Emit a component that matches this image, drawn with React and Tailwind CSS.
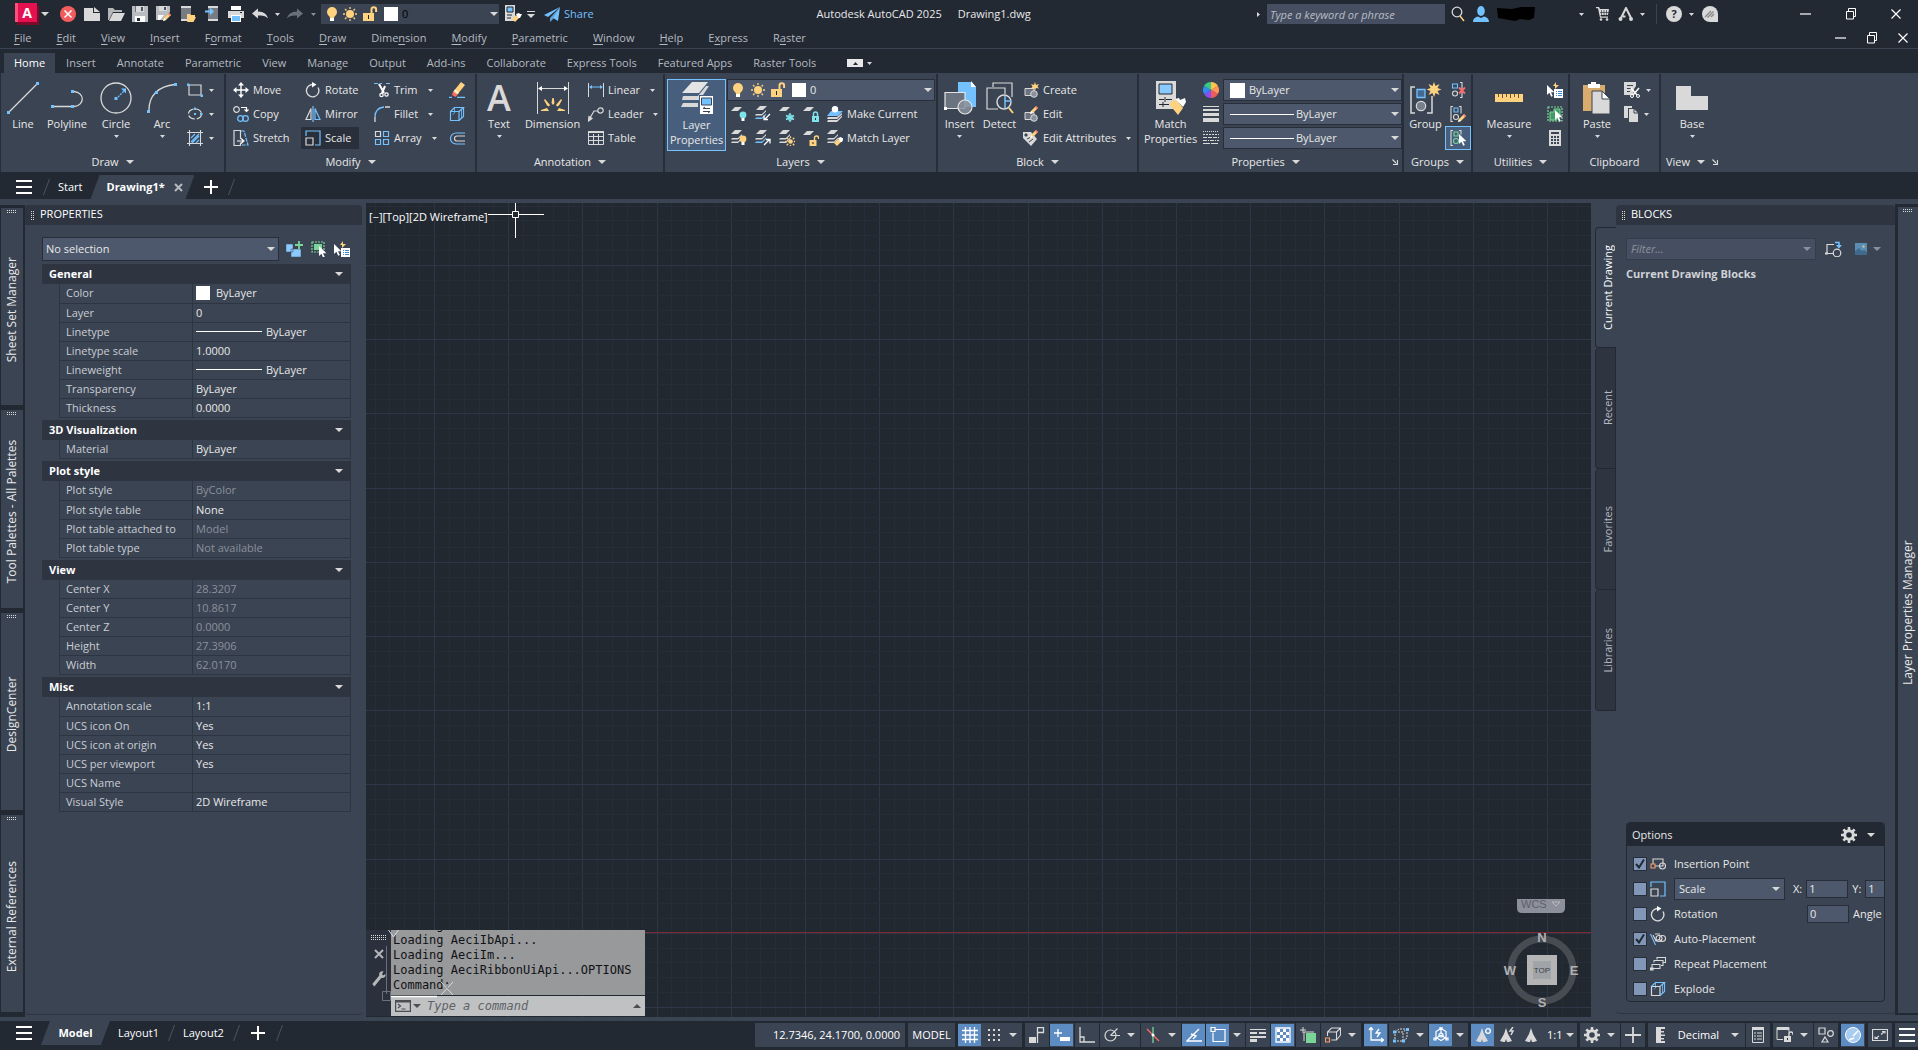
import { clsx } from 'clsx'

const W = '#d9d9d9'
const B = '#73c2ff'
const Y = '#ffd27f'
const G = '#7ad696'
const R = '#ff6b6b'
const C = '#7fe3ea'

const sheet = (x, y, fill = W) => <path d={`M${x + 4} ${y}h7l-4 4h-7z`} fill={fill} />

// lower sheets of a stack, only their front edge is seen
const edge = (x, y, fill = W) => <path d={`M${x + 1} ${y}h6l4-4v1.500l-4 4h-7z`} fill={fill} />

const bulb = (x, y, fill = Y) => (
    <g>
        <circle cx={x} cy={y} r="3.4" fill={fill} />
        <path d={`M${x - 1.5} ${y + 3}h3v3h-3z`} fill="#fff" />
    </g>
)

const sun = (x, y, r) => (
    <g stroke={Y} strokeWidth="1.3">
        <circle cx={x} cy={y} r={r} fill={Y} stroke="none" />
        {[0, 45, 90, 135, 180, 225, 270, 315].map((a) => (
            <path key={a} d={`M${x} ${y - r - 1}v-2`} transform={`rotate(${a} ${x} ${y})`} />
        ))}
    </g>
)

const padlock = (x, y, fill = Y, open = true) => (
    <g>
        <path d={`M${x} ${y}h7v6h-7z`} fill={fill} />
        <path
            d={open ? `M${x + 5} ${y}v-2a2 2 0 0 1 4 0v1` : `M${x + 1.5} ${y}v-2a2 2 0 0 1 4 0v2`}
            fill="none"
            stroke={fill}
            strokeWidth="1.4"
        />
        <path d={`M${x + 3} ${y + 2}h1v2h-1z`} fill="#222933" />
    </g>
)

const pencil = (x, y) => (
    <g>
        <path d={`M${x} ${y + 8}l1-3 5-5 2 2-5 5z`} fill={Y} />
        <path d={`M${x + 5} ${y + 1}l1-1 2 2-1 1z`} fill={R} />
        <path d={`M${x} ${y + 8}l1-3 2 2z`} fill="#fff" />
    </g>
)

const cursor = (x, y) => <path d={`M${x} ${y}v10l2.4-2.2 1.8 4 1.6-.8-1.8-3.8h3.4z`} fill="#fff" />

const brush = (x, y) => (
    <g>
        <path d={`M${x} ${y + 6}l4-4 3 3-4 4z`} fill={Y} />
        <path d={`M${x + 4} ${y + 1}l3-1 1 1 2 0-2 4-2 0z`} fill="#fff" />
    </g>
)

const cube = (front, side) => (
    <g fill="none" strokeWidth="1.2">
        <path d="M1.500 5.500h8.500v9h-8.500z" stroke={front} />
        <path d="M1.500 5.500l4-4h9l-4.500 4M14.500 1.500v9l-4.500 4" stroke={side} />
        <path d="M4 8.500l2-2.500M5.500 1.500v3.500M12.500 3v9.500" stroke={side} strokeWidth="0.8" />
    </g>
)

const annoStar = <path d="M8 1l2 6 4 7-3.500 1h-1.500l-1-3-1 3h-1.500l-3.500-1 4-7z" fill={W} />

// [width, height, drawing]
const icons = {
    newFile: [20, 16, <path d="M2 2h9v5h7v8h-16zM12 1l6 5h-6z" fill={W} />],
    open: [
        20,
        16,
        <g fill={W}>
            <path d="M2 2h5l2 2h7v2h-9l-4 8h-1z" fillOpacity="0.800" />
            <path d="M7 7h12l-4 8h-12z" />
        </g>
    ],
    save: [
        16,
        16,
        <g>
            <path d="M0 0h16v16h-16z" fill="#b9bcc1" />
            <path d="M3 0h9v6h-9z" fill="#6f7683" />
            <path d="M4 0h8v6h-8z" fill={W} />
            <path d="M9 1h2v4h-2z" fill="#4b5463" />
            <path d="M3 10h10v6h-10z" fill="#fff" />
            <path d="M5 12h3v3h-3z" fill="#222933" />
        </g>
    ],
    saveAs: [
        16,
        16,
        <g>
            <path d="M0 0h14v6l-7 8h-7z" fill="#b9bcc1" />
            <path d="M3 0h8v5h-8z" fill={W} />
            <path d="M8 1h2v3h-2z" fill="#4b5463" />
            <path d="M2 9h6l-4 5h-2z" fill="#fff" />
            {pencil(7, 7)}
        </g>
    ],
    mobileOpen: [
        16,
        18,
        <g>
            <path d="M1 1h10v15h-10z" fill="#777c84" />
            <path d="M1 1h10v2h-10zM1 14h7v2h-7z" fill={W} />
            <path d="M7 9h3l1 1h4v2h-6l-2 4zM9 12h7l-2.500 5h-6.500z" fill={Y} />
        </g>
    ],
    mobileSave: [
        16,
        18,
        <g>
            <path d="M4 1h10v15h-10z" fill="#777c84" />
            <path d="M4 1h10v2h-10zM4 14h10v2h-10z" fill={W} />
            <path d="M1 5.500h5v-3l4 4-4 4v-3h-5z" fill={B} />
        </g>
    ],
    print: [
        18,
        16,
        <g>
            <path d="M4 0h10v4h-10z" fill="#fff" />
            <path d="M1 5h16v7h-16z" fill={W} />
            <path d="M4 9h10v7h-10z" fill="#fff" />
            <path d="M5 10h8v5h-8z" fill={B} />
            <path d="M13 6h2v1h-2z" fill="#222933" />
        </g>
    ],
    undo: [18, 12, <path d="M1 5.500l6-5v3c6 0 9 3 10 7-3-3-5-3-10-3v3z" fill={W} />],
    redo: [18, 12, <path d="M17 5.500l-6-5v3c-6 0-9 3-10 7 3-3 5-3 10-3v3z" fill="#6a707a" />],
    bulb: [12, 16, <g><circle cx="6" cy="6" r="5" fill={Y} /><path d="M4 10h4v5h-4z" fill="#fff" /><path d="M3 9h6l-1 3h-4z" fill={Y} /></g>],
    sun: [16, 16, sun(8, 8, 4)],
    lock: [
        16,
        16,
        <g>
            <path d="M1 7h11v8h-11z" fill={Y} />
            <path d="M9.500 7v-3.500a2.300 2.300 0 0 1 4.600 0v2.500" fill="none" stroke={Y} strokeWidth="2" />
            <path d="M6 9h1v4h-1z" fill="#222933" />
        </g>
    ],
    matchProps: [
        18,
        18,
        <g>
            <path d="M1 0h10v16h-10z" fill={W} />
            <path d="M3 2h6v5h-6z" fill={B} stroke="#222933" />
            <path d="M3 10h5M3 13h4" stroke="#222933" />
            {brush(8, 8)}
        </g>
    ],
    share: [
        16,
        15,
        <g fill={B}>
            <path d="M16 0l-16 8 4 2z" />
            <path d="M16 0l-10 11v4l3-3z" opacity="0.800" />
            <path d="M16 0l-2 14-5-3z" />
        </g>
    ],
    search: [
        14,
        16,
        <g fill="none">
            <circle cx="6" cy="6" r="4.800" stroke={W} strokeWidth="1.300" />
            <path d="M9 10l4 5" stroke={Y} strokeWidth="1.500" />
        </g>
    ],
    user: [16, 16, <g fill={B}><ellipse cx="8" cy="5" rx="3.800" ry="5" /><path d="M0 16c0-4 3-5 5-5.500l3 1.500 3-1.500c2 .5 5 1.500 5 5.500z" /></g>],
    cart: [
        14,
        14,
        <g fill={W}>
            <path d="M0 0h3l1 2h9l-1 6h-7.500l.5 1.500h7v1.200h-8l-2-9.500h-2z" />
            <path d="M5.500 3v5M8 3v5M10.500 3v5M4 5.500h9" stroke="#222933" strokeWidth="0.600" />
            <circle cx="5" cy="12.500" r="1.300" />
            <circle cx="11" cy="12.500" r="1.300" />
        </g>
    ],
    appStore: [
        16,
        14,
        <g fill="none" stroke={W} strokeWidth="2">
            <path d="M3 11l5-10 5 10M5 9.500h2.500" />
            <circle cx="2.500" cy="12" r="1" />
            <circle cx="13" cy="12" r="1" />
        </g>
    ],
    assistant: [
        16,
        16,
        <g>
            <path d="M16 16h-8a8 8 0 1 1 8-8z" fill={W} />
            <path d="M3 11l6-6M5.500 11.500l6-6M9 11l3-3" stroke="#888" strokeWidth="1.400" />
        </g>
    ],
    redaction: [38, 14, <path d="M0 1l15 1 9-2 14 0-1 11-5 2-9-1-5 2-17-3z" fill="#000" />],
    restore: [10, 12, <path d="M.5 3.500h7v7.500h-7zM2.500 3v-2.500h7v8h-2" fill="none" stroke="#fff" />],
    times: [10, 10, <path d="M.5.5l9 9M9.500.5l-9 9" stroke="#fff" strokeWidth="1.200" />],
    minus: [11, 2, <path d="M0 1h11" stroke="#fff" strokeWidth="1.200" />],

    line: [32, 32, <g><path d="M2 30l28-28" stroke={W} strokeWidth="1.300" /><path d="M0 29h3v3h-3zM29 0h3v3h-3z" fill={B} /></g>],
    polyline: [
        32,
        32,
        <g>
            <path d="M2 24.500h20M23 24.500c11-1 11-14 0-15" fill="none" stroke={W} strokeWidth="1.300" />
            <path d="M0 23h3v3h-3zM20 23h3v3h-3zM20 8h3v3h-3z" fill={B} />
        </g>
    ],
    circle: [
        32,
        32,
        <g>
            <circle cx="16" cy="16" r="15" fill="none" stroke={W} strokeWidth="1.300" />
            <path d="M18 15l6-6" stroke={B} strokeWidth="1.300" strokeDasharray="2 1" />
            <path d="M14.500 15h3v3h-3zM26 6.500v5l-5-5z" fill={B} />
        </g>
    ],
    arc: [
        32,
        32,
        <g>
            <path d="M3 28c0-14 9-24 26-25.500" fill="none" stroke={W} strokeWidth="1.300" />
            <path d="M1 28h3v3h-3zM28 1h3v3h-3zM9 9h3v3h-3z" fill={B} />
        </g>
    ],
    rect: [16, 16, <g><path d="M2 3h12v10h-12z" fill="none" stroke={W} strokeWidth="1.200" /><path d="M0 1.500h2.500v2.500h-2.500zM13.500 12.500h2.500v2.500h-2.500z" fill={B} /></g>],
    ellipse: [
        16,
        16,
        <g>
            <ellipse cx="8" cy="8" rx="6.500" ry="5" fill="none" stroke={W} strokeWidth="1.200" strokeDasharray="7 2" />
            <path d="M7 1.500h2v2.500h-2zM7 7h2v2h-2zM13 7h2.500v2h-2.500z" fill={B} />
        </g>
    ],
    hatch: [
        16,
        16,
        <g>
            <path d="M0 2.500h16M0 13.500h16M2.500 0v16M13.500 0v16" stroke={W} strokeWidth="1.100" />
            <path d="M4 8l4-4M4 12l8-8M5 13l7-7M9 13l3-3" stroke={B} strokeWidth="1.200" />
        </g>
    ],
    move: [
        16,
        16,
        <g fill="#fff">
            <path d="M8 0l3 3.500h-6zM8 16l3-3.500h-6zM0 8l3.500-3v6zM16 8l-3.500-3v6z" />
            <path d="M7.300 3h1.400v10h-1.400zM3 7.300h10v1.400h-10z" />
        </g>
    ],
    copy: [
        16,
        16,
        <g fill="none" strokeWidth="1.200">
            <circle cx="3.500" cy="3.500" r="2.800" stroke={W} />
            <path d="M8 1.500h5.500v3M11.500 3.500l2 2 2-2" stroke="#fff" />
            <circle cx="7.500" cy="12.500" r="2.800" stroke={B} />
            <circle cx="12.500" cy="12.500" r="2.800" stroke={B} />
        </g>
    ],
    stretch: [
        16,
        16,
        <g fill="none">
            <path d="M7.500 9v-8.500h-6.500v15h6.500v-3" stroke={W} strokeWidth="1.200" />
            <path d="M8 1h3l4 14h-6" stroke={B} strokeWidth="1.200" strokeDasharray="4 1" />
            <path d="M4 11h6M8 8.500l3 2.500-3 2.500" stroke="#fff" strokeWidth="1.200" />
        </g>
    ],
    rotate: [
        16,
        16,
        <g>
            <path d="M13 5.500a6.200 6.200 0 1 1-6-3" fill="none" stroke={W} strokeWidth="1.400" />
            <path d="M7 0l4.500 2.500-4.500 3z" fill="#fff" />
        </g>
    ],
    mirror: [
        16,
        16,
        <g fill="none" strokeWidth="1.200">
            <path d="M6 2.500v11h-5z" stroke={W} />
            <path d="M8 0v16M10 2.500v11h5z" stroke={B} />
        </g>
    ],
    scale: [
        16,
        16,
        <g fill="none" strokeWidth="1.200">
            <path d="M1 6v-5h14v14h-5" stroke={B} />
            <path d="M1 8h7v7h-7z" stroke={W} />
        </g>
    ],
    trim: [
        16,
        16,
        <g fill="none">
            <path d="M0 1.500h4M6 1.500h2M12 1.500h4" stroke={B} strokeWidth="1.200" />
            <path d="M5 2l5 9M11 4l-3 7" stroke="#fff" strokeWidth="2" />
            <circle cx="7.500" cy="13" r="1.700" stroke="#fff" strokeWidth="1.200" />
            <circle cx="12.500" cy="12.500" r="1.700" stroke="#fff" strokeWidth="1.200" />
        </g>
    ],
    fillet: [
        16,
        16,
        <g fill="none" strokeWidth="1.300">
            <path d="M1 11c0-7 4-9.500 9-10" stroke={B} />
            <path d="M11 1h5M1 11v5" stroke={W} />
        </g>
    ],
    array: [
        16,
        16,
        <g fill="none" strokeWidth="1.200">
            <path d="M1.500 1.500h5v5h-5z" stroke={W} />
            <path d="M9.500 1.500h5v5h-5zM1.500 9.500h5v5h-5zM9.500 9.500h5v5h-5z" stroke={B} />
        </g>
    ],
    erase: [
        16,
        16,
        <g>
            <path d="M4 10l8-10 4 3-8 10z" fill={Y} />
            <path d="M4 9.500l4.500 3.500-2 2-3.500-2z" fill={R} />
            <path d="M5.500 8l4 3.200" stroke="#fff" strokeWidth="1.200" />
            <path d="M0 15.300h3M8 15.300h8" stroke={B} strokeWidth="1.200" />
        </g>
    ],
    explode: [16, 16, cube(B, B)],
    explodeWhite: [16, 16, cube(W, B)],
    offset: [
        16,
        16,
        <g fill="none" strokeWidth="1.200">
            <path d="M16 3h-9a5.500 5.500 0 0 0 0 11h9" stroke={B} />
            <path d="M16 6h-8a2.500 2.500 0 0 0 0 5h8" stroke={W} />
        </g>
    ],
    dimension: [
        32,
        32,
        <g>
            <path d="M.5 0v32M31.500 0v32M2 6.500h28" stroke={W} />
            <path d="M1 6.500l4-2.500v5zM31 6.500l-4-2.500v5z" fill="#fff" />
            <g fill={Y}>
                <path d="M15.300 16h1.400l.8 5-1.500 2-1.500-2zM7 18l1-1 5 6-1 1.500-2-1zM25 18l-1-1-5 6 1 1.500 2-1zM4 28l6-2 2 3h-8zM28 28l-6-2-2 3h8z" />
            </g>
        </g>
    ],
    linear: [16, 16, <g><path d="M.5 1v14M15.500 1v14" stroke={W} /><path d="M3 5h10" stroke={B} /><path d="M1 5l3-2v4zM15 5l-3-2v4z" fill={B} /></g>],
    leader: [
        16,
        16,
        <g fill="none" stroke={W} strokeWidth="1.200">
            <circle cx="12.500" cy="4.500" r="2.700" />
            <path d="M10 5h-4l-4 7" />
            <path d="M.5 15l.5-4.500 3 2z" fill={W} />
        </g>
    ],
    table: [
        16,
        14,
        <g>
            <path d="M.5.5h15v13h-15z" fill="none" stroke={W} />
            <path d="M0 0h16v2h-16z" fill={W} />
            <path d="M1 5.500h14M1 9.500h14M5.500 3v10M10.500 3v10" stroke={W} />
        </g>
    ],
    layerProps: [
        32,
        32,
        <g fill={W}>
            <path d="M11 0h16l-9 11h-17z" fill="#e4e4e4" />
            <path d="M2 14h15l8-10h3l-6 9h-4v5h-17z" />
            <path d="M2 21h15v4h-17z" />
            <path d="M19 14h13v18h-13z" fill="#fff" />
            <path d="M20.500 16h10v7h-10z" fill={B} stroke="#3b4453" />
            <path d="M22 26.500h7M24 25l-2 1.500M22 29.500h7M27 31l2-1.500" stroke="#3b4453" />
        </g>
    ],
    lyrOff: [16, 16, <g>{sheet(0, 1)}{bulb(12, 9, C)}</g>],
    lyrIsolate: [16, 16, <g>{edge(0, 11.500, B)}{edge(0, 8)}{sheet(1, 0)}<path d="M15 8l-5 5M9 9.500v4h4" fill="none" stroke="#fff" strokeWidth="1.300" /></g>],
    lyrFreeze: [16, 16, <g>{sheet(0, 1)}<path d="M11 7v9M7 9.500l8 4M7 13.500l8-4" stroke={C} strokeWidth="1.400" /><circle cx="11" cy="11.500" r="2.800" fill="none" stroke={C} /></g>],
    lyrLock: [16, 16, <g>{sheet(0, 1)}{padlock(9, 10, C, false)}</g>],
    lyrOn: [16, 16, <g>{edge(0, 11.500)}{edge(0, 8)}{sheet(0, 0)}{bulb(12, 9)}</g>],
    lyrUnisolate: [16, 16, <g>{edge(0, 11.500, B)}{edge(0, 8)}{sheet(1, 0)}<path d="M9 15l5-5M11 9.500h4v4" fill="none" stroke="#fff" strokeWidth="1.300" /></g>],
    lyrThaw: [16, 16, <g>{edge(0, 11.500)}{edge(0, 8)}{sheet(0, 0)}{sun(11.500, 11.500, 2.300)}</g>],
    lyrUnlock: [16, 16, <g>{sheet(0, 1)}{padlock(6.500, 10)}</g>],
    makeCurrent: [
        16,
        16,
        <g>
            <path d="M1 14h9l5-4.500v1.500l-5 5h-10zM1 11h9l5-4v1.500l-5 4.500h-10z" fill={W} />
            <path d="M4 5h12l-5 5h-11z" fill={B} />
            <circle cx="8" cy="3.200" r="3.200" fill="#fff" />
        </g>
    ],
    matchLayer: [16, 16, <g>{edge(0, 11.500)}{edge(0, 8)}{sheet(0, 0)}{brush(7, 7)}</g>],
    insertBlock: [
        32,
        34,
        <g>
            <path d="M14 1h13l5 5v20h-18z" fill={B} />
            <path d="M27 0v6h5z" fill="#fff" />
            <path d="M1 11.500h20v16h-20z" fill="#6b7380" stroke="#e4e4e4" strokeWidth="1.200" />
            <circle cx="21" cy="26" r="7" fill="#8a919b" fillOpacity="0.850" stroke="#e4e4e4" strokeWidth="1.200" />
            <path d="M0 26h3v3h-3z" fill="#fff" />
        </g>
    ],
    detect: [
        30,
        32,
        <g fill="none">
            <path d="M8 5v-4h19v14" stroke={W} strokeWidth="1.200" />
            <path d="M13 27h-11v-21h18v6" stroke={W} strokeWidth="1.200" />
            <circle cx="19" cy="20" r="7" stroke={W} strokeWidth="1.500" fill="#3b4453" />
            <path d="M20 14v12M20 19h6" stroke={B} strokeWidth="1.500" />
            <path d="M24 26l4 5" stroke={Y} strokeWidth="2" />
        </g>
    ],
    blockCreate: [
        16,
        16,
        <g>
            <path d="M2 6.500h9v7h-9z" fill="#6b7380" stroke={W} />
            <circle cx="11" cy="12" r="3.300" fill="#8a919b" stroke={W} />
            <path d="M12 0l1 3 3-1-1.500 2.500 1.500 2-3-.5-1 2.500-1-2.500-3 .5 1.500-2-1.500-2.500 3 1z" fill={Y} />
        </g>
    ],
    blockEdit: [
        16,
        16,
        <g>
            <path d="M2 6.500h9v7h-9z" fill="#6b7380" stroke={W} />
            <circle cx="11" cy="12" r="3.300" fill="#8a919b" stroke={W} />
            {pencil(7, 0)}
        </g>
    ],
    blockAttr: [
        16,
        16,
        <g>
            <path d="M0 2h8l6 7-6 7-8-8z" fill={W} />
            <path d="M2 4h2v2h-2zM4 9l4-2M6 12l4-3" fill="#3b4453" stroke="#3b4453" />
            {pencil(7, 0)}
        </g>
    ],
    matchBig: [
        32,
        34,
        <g>
            <path d="M1 0h20v28h-20z" fill={W} />
            <path d="M4 3h13v10h-13z" fill="#8bcaff" stroke="#222933" />
            <path d="M4 18.500h5M11 18.500h6M4 23.500h10M10 16v5M8 21v5" stroke="#222933" />
            <path d="M14 23l7-5 7 9-5 7z" fill={Y} />
            <path d="M20 18l4-1 1 2 5-2 1 4-3 5z" fill="#fff" />
        </g>
    ],
    colorWheel: [
        16,
        16,
        <g transform="translate(8 8)">
            {['#ffc24d', '#ff9559', '#f05a5a', '#8a4df0', '#2f8cf0', '#35c98a'].map((c, i) => (
                <path key={c} d="M0 0v-8a8 8 0 0 1 6.930 4z" fill={c} transform={`rotate(${i * 60})`} />
            ))}
        </g>
    ],
    lineweight: [16, 16, <path d="M0 0h16v1h-16zM0 3h16v2h-16zM0 7h16v3h-16zM0 12h16v4h-16z" fill={W} />],
    linetype: [
        16,
        14,
        <g stroke={W}>
            <path d="M0 .5h16" strokeDasharray="1 1" />
            <path d="M0 3.500h16" strokeDasharray="2 1" />
            <path d="M0 6.500h16" strokeDasharray="4 1" />
            <path d="M0 9.500h16" strokeDasharray="4 1 1 1" />
            <path d="M0 12.500h16" strokeDasharray="7 1" />
        </g>
    ],
    group: [
        32,
        34,
        <g fill="none">
            <path d="M5 6h-4v26h4M17 32h5v-17" stroke={W} strokeWidth="1.500" />
            <path d="M7 8.500h8v8h-8z" fill="#44688f" stroke={B} strokeWidth="1.300" />
            <circle cx="11" cy="25" r="4.700" fill="#777f8a" stroke={W} strokeWidth="1.200" />
            <path d="M24 1l1.500 4 4-2-2 4 4 1.500-4 1.500 2 4-4-2-1.500 4-1.500-4-4 2 2-4-4-1.500 4-1.500-2-4 4 2z" fill={Y} />
        </g>
    ],
    ungroup: [
        16,
        16,
        <g fill="none" strokeWidth="1.100">
            <path d="M10 .5h2v15h-2" stroke={W} />
            <path d="M2.500 2h5v4h-5z" stroke={B} />
            <circle cx="5" cy="11.500" r="2.500" stroke={W} />
            <path d="M9 5.500l6 6M15 5.500l-6 6" stroke={R} strokeWidth="1.800" />
        </g>
    ],
    groupEdit: [
        16,
        16,
        <g fill="none" strokeWidth="1.100">
            <path d="M3 .5h-2v15h2M9 .5h2v7" stroke={W} />
            <path d="M4 2h4v4h-4z" stroke={B} />
            <circle cx="6" cy="11" r="2.500" stroke={W} />
            {pencil(8, 8)}
        </g>
    ],
    groupSelect: [
        16,
        16,
        <g fill="none" strokeWidth="1.100">
            <path d="M3 .5h-2v15h2M9 .5h2v4" stroke={W} />
            <path d="M4 2h4v4h-4z" stroke={G} />
            <circle cx="6" cy="11" r="2.500" stroke={G} />
            {cursor(9, 4)}
        </g>
    ],
    measure: [28, 8, <g><path d="M0 0h28v8h-28z" fill={Y} /><path d="M3.500 0v3M7.500 0v4M11.500 0v3M15.500 0v4M19.500 0v3M23.500 0v4" stroke="#6b5a33" /></g>],
    quickSelect: [
        16,
        16,
        <g>
            <path d="M6 4l3-4 0 3 3 0-4 4 0-3z" fill={Y} />
            {cursor(0, 3)}
            <path d="M7 7h9v9h-9z" fill="#fff" />
            <path d="M9 9.500h1M11 9.500h4M9 11.500h1M11 11.500h4M9 13.500h1M11 13.500h4" stroke="#3f87c7" />
        </g>
    ],
    selectAll: [
        16,
        16,
        <g>
            <path d="M1 1h14v14h-14z" fill="none" stroke={G} strokeWidth="1.200" strokeDasharray="2 1" />
            <path d="M3 6h4v-3h6v8h-3v3h-7z" fill="#3f9a68" stroke={G} />
            {cursor(8, 4)}
        </g>
    ],
    calc: [
        12,
        16,
        <g>
            <path d="M0 0h12v16h-12z" fill={W} />
            <path d="M2 2h8v2h-8zM2 6h2v2h-2zM5 6h2v2h-2zM8 6h2v2h-2zM2 9h2v2h-2zM5 9h2v2h-2zM8 9h2v2h-2zM2 12h2v2h-2zM5 12h2v2h-2zM8 12h2v2h-2z" fill="#3b4453" />
        </g>
    ],
    paste: [
        28,
        32,
        <g>
            <path d="M0 3h22v26h-22z" fill="#d9ab6d" />
            <path d="M5 2h3v-2h5v2h4v4h-12z" fill="#fff" />
            <path d="M9 9h10l8 8v15h-18z" fill={W} stroke="#3b4453" />
            <path d="M19 9v8h8z" fill="#fff" stroke="#3b4453" />
        </g>
    ],
    cut: [
        16,
        16,
        <g fill="none">
            <path d="M0 0h12v4l-2 3-1 6h-9z" fill={W} />
            <path d="M3 3.500h6M3 6.500h4M3 9.500h3" stroke="#3b4453" />
            <path d="M7 6l6 7M15 6l-6 7" stroke="#fff" strokeWidth="1.500" />
            <circle cx="8" cy="14" r="1.500" stroke="#fff" />
            <circle cx="14" cy="14" r="1.500" stroke="#fff" />
        </g>
    ],
    copyClip: [14, 16, <g><path d="M0 0h8v2h-4v10h-4z" fill={W} /><path d="M5 3h5l4 4v9h-9z" fill={W} /><path d="M10 3v4h4" fill="none" stroke="#3b4453" /></g>],
    base: [32, 24, <path d="M0 0h15v10h17v14h-32z" fill={W} />],
    launcher: [6, 6, <path d="M.5.5l4 4M5.500 1v4.500h-4.500" fill="none" stroke={W} strokeWidth="1.200" />],

    addSelect: [18, 16, <g><path d="M0 3h7v8h-7zM5 8h10v8h-10z" fill="#8bcaff" stroke="#3b4453" strokeWidth="0.500" /><path d="M13 0v8M9 4h8" stroke={G} strokeWidth="1.800" /></g>],
    pickSelect: [
        16,
        16,
        <g>
            <path d="M1 1h12v10h-12z" fill="none" stroke={G} strokeWidth="1.200" strokeDasharray="2 1" />
            <path d="M3 3h8v6h-8z" fill={G} />
            {cursor(8, 5)}
        </g>
    ],
    blockInsert: [
        18,
        16,
        <g fill="none">
            <path d="M9 3.500h-7v9h7" stroke={W} strokeWidth="1.200" />
            <path d="M10 1.500h4v4" stroke={B} strokeWidth="1.500" />
            <path d="M11 4h6l-3 3.500z" fill={B} />
            <circle cx="12" cy="12" r="3.800" stroke={W} strokeWidth="1.200" />
            <path d="M0 11.500h3v2h-3z" fill={W} />
        </g>
    ],
    thumb: [12, 12, <g><path d="M0 0h12v12h-12z" fill="#5a8db3" /><path d="M0 8l4-3 3 3 2-1 3 2v3h-12z" fill="#3f6a8c" /><circle cx="8.500" cy="3.500" r="1.200" fill="#c9c08d" /></g>],
    gear: [
        16,
        16,
        <g>
            <circle cx="8" cy="8" r="4.300" fill="none" stroke={W} strokeWidth="3" />
            {[0, 45, 90, 135, 180, 225, 270, 315].map((a) => (
                <path key={a} d="M6.700 0h2.600v3h-2.600z" fill={W} transform={`rotate(${a} 8 8)`} />
            ))}
        </g>
    ],
    insPoint: [
        16,
        12,
        <g fill="none" strokeWidth="1.100">
            <path d="M3 6v-5h10v3M5 8h5" stroke={W} />
            <path d="M1 6h4v4h-4z" stroke="#f0a070" />
            <circle cx="12.500" cy="8" r="3" stroke={W} />
            <path d="M9 8h4v-4" stroke={W} />
        </g>
    ],
    autoPlace: [
        16,
        12,
        <g fill="none" strokeWidth="1.100">
            <path d="M.5 1l5 11" stroke={B} />
            <path d="M3 2l3 6 4-2M5 1h5" stroke={W} />
            <circle cx="9" cy="5.500" r="3" stroke={W} />
            <circle cx="12.500" cy="5.500" r="3" stroke={W} />
        </g>
    ],
    repeat: [
        16,
        14,
        <g fill="none" stroke={W} strokeWidth="1.100">
            <path d="M7 2.500v-2h8.500v5h-2M4 5.500v-2h9v5h-2M2 7.500h8v4h-8z" />
            <path d="M0 11h3v2h-3z" fill={W} />
        </g>
    ],

    stGrid: [16, 16, <path d="M3.500 0v16M8 0v16M12.500 0v16M0 3.500h16M0 8h16M0 12.500h16" stroke="#fff" strokeWidth="1.300" />],
    stDots: [
        14,
        14,
        <path d="M1 1h2v2h-2zM6 1h2v2h-2zM11 1h2v2h-2zM1 6h2v2h-2zM6 6h2v2h-2zM11 6h2v2h-2zM1 11h2v2h-2zM6 11h2v2h-2zM11 11h2v2h-2z" fill={W} />
    ],
    stInfer: [16, 16, <g><path d="M0 10h7v6h-7z" fill={W} /><path d="M8.500 16v-15.500h6v5h-6" fill="none" stroke={W} strokeWidth="1.300" /></g>],
    stDyn: [16, 14, <g><path d="M4 1v8M0 5h8" stroke="#fff" strokeWidth="1.300" /><path d="M6 9h10v4h-10z" fill="#fff" /></g>],
    stOrtho: [16, 16, <path d="M1 0v15h15M1 10h4v5" fill="none" stroke={W} strokeWidth="1.300" />],
    stPolar: [16, 16, <g fill="none" stroke={W} strokeWidth="1.200"><circle cx="6.500" cy="8.500" r="5.500" /><path d="M6.500 8.500h9.500M6.500 8.500l7-7" /></g>],
    stIso: [14, 16, <g strokeWidth="1.300"><path d="M1 2l12 12" stroke={R} /><path d="M7 0v16" stroke={G} /><circle cx="7" cy="8" r="1.500" fill="#fff" /></g>],
    stTrack: [16, 14, <g fill="none" stroke="#fff" strokeWidth="1.400"><path d="M13 1l-12 12h15" /><path d="M5 6l5 2-3 3" /></g>],
    stOsnap: [16, 16, <g fill="none" stroke="#fff" strokeWidth="1.200"><path d="M5 2.500h10v12h-12v-9" /><path d="M1 .5h4v4h-4z" /></g>],
    stLw: [16, 14, <path d="M0 1h16v1h-16zM0 4h7v2h-7zM9 4h7v2h-7zM0 8h16v2h-16zM0 11h7v3h-7z" fill={W} />],
    stTransp: [
        16,
        16,
        <g>
            <path d="M1 1h14v14h-14z" fill="none" stroke="#fff" strokeWidth="1.300" />
            <path d="M2 2h3v3h-3zM8 2h3v3h-3zM5 5h3v3h-3zM11 5h3v3h-3zM2 8h3v3h-3zM8 8h3v3h-3zM5 11h3v3h-3zM11 11h3v3h-3z" fill="#fff" />
        </g>
    ],
    stCycle: [16, 16, <g><path d="M3 0v6M0 3h6" stroke={W} /><path d="M4 14v-9h10" fill="none" stroke={W} /><path d="M6 6h10v10h-10z" fill={G} /></g>],
    st3d: [16, 16, <g fill="none"><path d="M2.500 9v-4l4-4h9v7l-4 5h-5M2.500 5h9v8M11.500 5l4-4" stroke={W} strokeWidth="1.100" /><path d="M.5 11h4v4h-4z" stroke="#f0a070" strokeWidth="1.200" /></g>],
    stUcs: [16, 16, <g fill="none" stroke="#fff" strokeWidth="1.300"><path d="M3 1v12h12M1 3l2-2.500 2 2.500M13 11l2.500 2-2.500 2" /><path d="M11 2l-3 4h4l-3 4" /></g>],
    stFilter: [16, 16, <g fill="none"><path d="M2 5h8v9h-8zM2 5l4-3h8l-4 3M14 2v9l-4 3" stroke={W} strokeDasharray="2 1" /><path d="M0 3.500h3v3h-3zM0 12.500h3v3h-3zM9 12.500h3v3h-3zM13 1h3v3h-3z" fill={B} /></g>],
    stGizmo: [16, 16, <g fill="none" stroke="#fff" strokeWidth="1.200"><path d="M8 1.500l5 3v6l-5 3-5-3v-6zM8 7v-5M8 8l-6 4M8 8l6 4" /><circle cx="8" cy="8" r="2" /><path d="M1 11h2v2h-2zM13 11h2v2h-2zM7 0h2v2h-2z" /></g>],
    stAnno: [18, 16, <g>{annoStar}<circle cx="14" cy="4" r="2.300" fill="none" stroke="#fff" strokeWidth="1.300" /></g>],
    stAnnoAuto: [18, 16, <g>{annoStar}<path d="M15 0l-3 4h3l-2 4" fill="none" stroke={W} strokeWidth="1.500" /></g>],
    stAnnoScale: [16, 16, annoStar],
    stPlus: [16, 16, <path d="M8 0v16M0 8h16" stroke={W} strokeWidth="1.800" />],
    stRuler: [10, 16, <path d="M0 0h9v2h-4v2h3v1.500h-3v2h4v1.500h-4v2h3v1.500h-3v1.500h4v2h-9z" fill={W} />],
    stQp: [12, 16, <g><path d="M.5.500h11v15h-11z" fill="none" stroke={W} /><path d="M0 0h12v3h-12z" fill={W} /><path d="M2 6h2M5 6h5M2 9h2M5 9h5M2 12h2M5 12h5" stroke={W} strokeWidth="1.200" /></g>],
    stLockUi: [17, 16, <g><path d="M7 12.500h-6v-12h12v5" fill="none" stroke={W} /><path d="M1 0h12v3h-12z" fill={W} />{padlock(8, 9, W)}</g>],
    stIsolate: [16, 16, <g fill="none" stroke={W} strokeWidth="1.200"><path d="M1 1h6v6h-6zM7 10l3 5h-6z" /><circle cx="12.500" cy="6.500" r="2.800" /></g>],
    stPerf: [16, 16, <g><circle cx="8" cy="8" r="7.500" fill="#a9cdf0" stroke="#fff" /><path d="M8 9l5-5M4 13l5-2" stroke="#fff" strokeWidth="1.500" /></g>],
    stFull: [16, 12, <g fill="none" stroke={W} strokeWidth="1.200"><path d="M.5.500h15v11h-15z" /><path d="M9 5.500l3.500-3M10 2.500h3v2M7 7l-3.500 2.500M3 7.500v2h3" /></g>],
    cmdPrompt: [16, 12, <g fill="none" stroke="#4a4d52" strokeWidth="1.200"><path d="M.6.6h14.800v10.800h-14.800z" /><path d="M0 1.500h16" strokeWidth="2" /><path d="M3 4l2.500 2-2.500 2M6.500 9h4" /></g>],
    wrench: [14, 16, <path d="M13.500 3l-2.500 1.500-1-1.500 1.500-2.500c-3-.8-5 1.500-4.200 4l-7 8.500 2 2.500 7-8.500c2.500.5 4.700-1 4.200-4z" fill="#b4b6b9" />]
}

function Icon({ name, className }) {
    const [w, h, art] = icons[name]
    return (
        <svg width={w} height={h} viewBox={`0 0 ${w} ${h}`} className={clsx('shrink-0', className)} aria-hidden="true">
            {art}
        </svg>
    )
}

function Caret({ small, color = 'text-[#d9d9d9]', className }) {
    return (
        <svg
            width={small ? 5 : 8}
            height={small ? 3 : 4}
            viewBox="0 0 8 4"
            preserveAspectRatio="none"
            className={clsx('pointer-events-none shrink-0', color, className)}
            aria-hidden="true"
        >
            <path d="M0 0h8l-4 4z" fill="currentColor" />
        </svg>
    )
}

function Burger({ className }) {
    return (
        <button aria-label="Menu" className={clsx('flex w-4 shrink-0 flex-col gap-1', className)}>
            <span className="h-0.5 w-full bg-white" />
            <span className="h-0.5 w-full bg-white" />
            <span className="h-0.5 w-full bg-white" />
        </button>
    )
}

function Slash() {
    return (
        <svg width="7" height="18" viewBox="0 0 7 18" className="shrink-0" aria-hidden="true">
            <path d="M6.500 1l-6 16" stroke="#4b5463" />
        </svg>
    )
}

function Combo({ label, value, children, className }) {
    return (
        <div className={clsx('flex items-center', className)}>
            {children}
            <select aria-label={label} defaultValue={value} className="min-w-0 flex-1 appearance-none bg-transparent outline-none">
                <option>{value}</option>
            </select>
            <Caret />
        </div>
    )
}

const menus = [
    ['', 'F', 'ile'],
    ['', 'E', 'dit'],
    ['', 'V', 'iew'],
    ['', 'I', 'nsert'],
    ['F', 'o', 'rmat'],
    ['', 'T', 'ools'],
    ['', 'D', 'raw'],
    ['Dime', 'n', 'sion'],
    ['', 'M', 'odify'],
    ['', 'P', 'arametric'],
    ['', 'W', 'indow'],
    ['', 'H', 'elp'],
    ['E', 'x', 'press'],
    ['R', 'a', 'ster']
]

const ribbonTabs = [
    'Home',
    'Insert',
    'Annotate',
    'Parametric',
    'View',
    'Manage',
    'Output',
    'Add-ins',
    'Collaborate',
    'Express Tools',
    'Featured Apps',
    'Raster Tools'
]

const quickIcons = ['newFile', 'open', 'save', 'saveAs', 'mobileOpen', 'mobileSave', 'print', 'undo']

function TitleBar() {
    return (
        <header className="flex h-7 items-center">
            <button aria-label="Application menu" className="ml-[15px] flex h-[22px] w-6 shrink-0">
                <span className="flex h-[19px] w-[22px] items-center justify-center border-l-3 border-[#ff4f78] bg-[#e51050] pr-px text-sm font-bold text-white shadow-[2px_3px_0_#7d0a2b]">
                    A
                </span>
            </button>
            <Caret className="mr-[3px] ml-0.5" />
            <button aria-label="Cancel" className="ml-1 flex w-6 justify-center">
                <svg width="16" height="16" viewBox="0 0 16 16" aria-hidden="true">
                    <circle cx="8" cy="8" r="8" fill="#f25c5c" />
                    <path d="M4.500 4.500l7 7M11.500 4.500l-7 7" stroke="#fff" strokeWidth="1.500" />
                </svg>
            </button>
            {quickIcons.map((name) => (
                <button key={name} aria-label={name} className="flex w-6 justify-center">
                    <Icon name={name} />
                </button>
            ))}
            <Caret small className="mx-[3px]" />
            <button aria-label="Redo" className="flex w-6 justify-center">
                <Icon name="redo" />
            </button>
            <Caret small className="mx-1" color="text-[#8a8f98]" />
            <Combo label="Layer" value="0" className="ml-px h-5 w-[178px] gap-1 bg-[#3b4453] pr-px pl-[5px]">
                <Icon name="bulb" />
                <Icon name="sun" />
                <Icon name="lock" />
                <span className="ml-0.5 h-[14px] w-[14px] bg-white" />
            </Combo>
            <button aria-label="Match properties" className="ml-[5px]">
                <Icon name="matchProps" />
            </button>
            <button aria-label="Customize" className="mx-px flex w-4 flex-col items-center gap-0.5">
                <span className="h-px w-2 bg-[#d9d9d9]" />
                <Caret />
            </button>
            <button className="ml-1 flex items-center gap-1 text-[#73c2ff]">
                <Icon name="share" />
                Share
            </button>
            <h1 className="ml-[223px] flex gap-4 whitespace-nowrap text-[#e8e8e8]">
                <span>Autodesk AutoCAD 2025</span>
                <span>Drawing1.dwg</span>
            </h1>
            <div className="ml-auto flex items-center">
                <Caret small className="-rotate-90" />
                <input
                    aria-label="Search"
                    placeholder="Type a keyword or phrase"
                    className="ml-[6px] h-5 w-[178px] bg-[#464f61] px-[3px] italic placeholder:text-[#b9bdc4]"
                />
                <button aria-label="Search help" className="ml-[6px]">
                    <Icon name="search" />
                </button>
                <button aria-label="Account" className="ml-2 flex items-center gap-2">
                    <Icon name="user" />
                    <Icon name="redaction" />
                </button>
                <Caret small className="ml-[44px]" />
                <button aria-label="Cart" className="ml-3">
                    <Icon name="cart" />
                </button>
                <button aria-label="App store" className="ml-2">
                    <Icon name="appStore" />
                </button>
                <Caret small className="mx-[6px]" />
                <span className="mx-[5px] h-5 w-px bg-[#3b4453]" />
                <button
                    aria-label="Help"
                    className="ml-1 flex h-4 w-4 items-center justify-center rounded-full bg-[#d9d9d9] font-bold text-[#222933]"
                >
                    ?
                </button>
                <Caret small className="mx-[7px]" />
                <button aria-label="Assistant" className="ml-px">
                    <Icon name="assistant" />
                </button>
                <button aria-label="Minimize" className="ml-[65px] flex w-[45px] justify-center">
                    <Icon name="minus" />
                </button>
                <button aria-label="Restore" className="flex w-[46px] justify-center">
                    <Icon name="restore" />
                </button>
                <button aria-label="Close" className="flex w-11 justify-center">
                    <Icon name="times" />
                </button>
            </div>
        </header>
    )
}

function MenuBar() {
    return (
        <nav className="flex h-[21px] items-center gap-px border-b border-[#3b4453] pl-0.5 text-[#b5b9c0]">
            {menus.map(([pre, key, post]) => (
                <button key={pre + key + post} className="px-3">
                    {pre}
                    <span className="underline underline-offset-2">{key}</span>
                    {post}
                </button>
            ))}
            <div className="ml-auto flex items-center">
                <button aria-label="Minimize drawing" className="flex w-8 justify-center">
                    <Icon name="minus" />
                </button>
                <button aria-label="Restore drawing" className="flex w-8 justify-center">
                    <Icon name="restore" />
                </button>
                <button aria-label="Close drawing" className="flex w-[30px] justify-center">
                    <Icon name="times" />
                </button>
            </div>
        </nav>
    )
}

function RibbonTabs() {
    return (
        <nav className="flex h-6 items-end gap-px pl-1">
            {ribbonTabs.map((tab, i) => (
                <button
                    key={tab}
                    className={clsx('h-5 px-[10px] whitespace-nowrap', i === 0 ? 'bg-[#3b4453] text-white' : 'text-[#b5b9c0]')}
                >
                    {tab}
                </button>
            ))}
            <button aria-label="Minimize ribbon" className="ml-5 flex h-5 items-center gap-1">
                <span className="flex h-2 w-4 items-center justify-center bg-[#e8e8e8]">
                    <Caret small className="rotate-180" color="text-[#222933]" />
                </span>
                <Caret small />
            </button>
        </nav>
    )
}

function Panel({ title, width, launcher, noCaret, children, className }) {
    return (
        <section className={clsx('flex shrink-0 flex-col border-r-2 border-[#272e39]', width)}>
            <div className={clsx('flex flex-1 pt-[5px]', className)}>{children}</div>
            <div className="flex h-5 items-center">
                <button className="flex flex-1 items-center justify-center gap-[7px]">
                    {title}
                    {!noCaret && <Caret />}
                </button>
                {launcher && <Icon name="launcher" className="mr-1" />}
            </div>
        </section>
    )
}

function BigButton({ icon, label, width, caret, children }) {
    return (
        <button className={clsx('flex shrink-0 flex-col items-center leading-[15px]', width)}>
            <span className="flex h-[37px] items-center justify-center">{icon ? <Icon name={icon} /> : children}</span>
            <span>{label}</span>
            {caret && <Caret small className="mt-1" />}
        </button>
    )
}

function Tool({ icon, label, caret, active, className }) {
    return (
        <button
            aria-label={label ? undefined : icon}
            className={clsx('flex h-[22px] items-center gap-1 px-1 whitespace-nowrap', active && 'bg-[#2a303b]', className)}
        >
            <Icon name={icon} />
            {label}
            {caret && <Caret small className={label ? 'ml-[6px]' : 'ml-0.5'} />}
        </button>
    )
}

function Column({ children, className }) {
    return <div className={clsx('flex shrink-0 flex-col items-start gap-0.5', className)}>{children}</div>
}

const field = 'border border-[#272e39] bg-[#4d586c]'

function Ribbon() {
    return (
        <div className="flex h-[99px] border-l border-[#272e39] bg-[#3b4453] pt-px text-[#e8e8e8]">
            <Panel title="Draw" width="w-[225px]" className="pl-0.5">
                <BigButton icon="line" label="Line" width="w-10" />
                <BigButton icon="polyline" label="Polyline" width="w-12" />
                <BigButton icon="circle" label="Circle" width="w-[50px]" caret />
                <BigButton icon="arc" label="Arc" width="w-[42px]" caret />
                <Column>
                    <Tool icon="rect" caret />
                    <Tool icon="ellipse" caret />
                    <Tool icon="hatch" caret />
                </Column>
            </Panel>

            <Panel title="Modify" width="w-[251px]" className="pl-[3px]">
                <Column className="w-[72px]">
                    <Tool icon="move" label="Move" />
                    <Tool icon="copy" label="Copy" />
                    <Tool icon="stretch" label="Stretch" />
                </Column>
                <Column className="w-[69px]">
                    <Tool icon="rotate" label="Rotate" />
                    <Tool icon="mirror" label="Mirror" />
                    <Tool icon="scale" label="Scale" active className="pr-2" />
                </Column>
                <Column className="w-[75px]">
                    <Tool icon="trim" label="Trim" caret />
                    <Tool icon="fillet" label="Fillet" caret />
                    <Tool icon="array" label="Array" caret />
                </Column>
                <Column>
                    <Tool icon="erase" />
                    <Tool icon="explode" />
                    <Tool icon="offset" />
                </Column>
            </Panel>

            <Panel title="Annotation" width="w-[188px]">
                <BigButton label="Text" width="w-11" caret>
                    <span className="text-4xl leading-none font-semibold text-[#d9d9d9]">A</span>
                </BigButton>
                <BigButton icon="dimension" label="Dimension" width="w-[63px]" />
                <Column>
                    <Tool icon="linear" label="Linear" caret />
                    <Tool icon="leader" label="Leader" caret />
                    <Tool icon="table" label="Table" />
                </Column>
            </Panel>

            <Panel title="Layers" width="w-[273px]" className="gap-px pl-0.5">
                <button className="flex h-[72px] w-[59px] shrink-0 flex-col items-center border border-[#73c2ff] bg-[#475f7d] pt-0.5 leading-[15px]">
                    <Icon name="layerProps" className="mb-[3px]" />
                    <span>Layer</span>
                    <span>Properties</span>
                </button>
                <Column>
                    <Combo label="Current layer" value="0" className={clsx('h-[22px] w-[208px] gap-1 pr-0.5 pl-1', field)}>
                        <Icon name="bulb" />
                        <Icon name="sun" className="ml-0.5" />
                        <Icon name="lock" />
                        <span className="ml-0.5 h-[14px] w-[14px] bg-white" />
                    </Combo>
                    <div className="flex">
                        <Tool icon="lyrOff" />
                        <Tool icon="lyrIsolate" />
                        <Tool icon="lyrFreeze" />
                        <Tool icon="lyrLock" />
                        <Tool icon="makeCurrent" label="Make Current" />
                    </div>
                    <div className="flex">
                        <Tool icon="lyrOn" />
                        <Tool icon="lyrUnisolate" />
                        <Tool icon="lyrThaw" />
                        <Tool icon="lyrUnlock" />
                        <Tool icon="matchLayer" label="Match Layer" />
                    </div>
                </Column>
            </Panel>

            <Panel title="Block" width="w-[201px]" className="pl-px">
                <BigButton icon="insertBlock" label="Insert" width="w-[41px]" caret />
                <BigButton icon="detect" label="Detect" width="w-[39px]" />
                <Column>
                    <Tool icon="blockCreate" label="Create" />
                    <Tool icon="blockEdit" label="Edit" />
                    <Tool icon="blockAttr" label="Edit Attributes" caret />
                </Column>
            </Panel>

            <Panel title="Properties" width="w-[265px]" className="pl-[3px]" launcher>
                <BigButton
                    icon="matchBig"
                    width="w-[57px]"
                    label={
                        <>
                            Match
                            <br />
                            Properties
                        </>
                    }
                />
                <Column>
                    <Tool icon="colorWheel" />
                    <Tool icon="lineweight" />
                    <Tool icon="linetype" />
                </Column>
                <Column>
                    <Combo label="Color" value="ByLayer" className={clsx('h-[22px] w-[179px] gap-1 pr-0.5 pl-[6px]', field)}>
                        <span className="h-[15px] w-[15px] bg-white" />
                    </Combo>
                    <Combo label="Lineweight" value="ByLayer" className={clsx('h-[22px] w-[179px] gap-0.5 pr-0.5 pl-[6px]', field)}>
                        <span className="h-px w-16 bg-white" />
                    </Combo>
                    <Combo label="Linetype" value="ByLayer" className={clsx('h-[22px] w-[179px] gap-0.5 pr-0.5 pl-[6px]', field)}>
                        <span className="h-px w-16 bg-white" />
                    </Combo>
                </Column>
            </Panel>

            <Panel title="Groups" width="w-[69px]" className="pl-px">
                <BigButton icon="group" label="Group" width="w-[41px]" />
                <Column>
                    <Tool icon="ungroup" />
                    <Tool icon="groupEdit" />
                    <Tool icon="groupSelect" className="bg-[#475f7d] outline outline-[#73c2ff]" />
                </Column>
            </Panel>

            <Panel title="Utilities" width="w-[97px]" className="pl-[10px]">
                <BigButton icon="measure" label="Measure" width="w-[52px]" caret />
                <Column className="ml-2">
                    <Tool icon="quickSelect" />
                    <Tool icon="selectAll" />
                    <Tool icon="calc" className="pl-[6px]" />
                </Column>
            </Panel>

            <Panel title="Clipboard" width="w-[91px]" noCaret className="pl-1">
                <BigButton icon="paste" label="Paste" width="w-[46px]" caret />
                <Column>
                    <Tool icon="cut" caret />
                    <Tool icon="copyClip" caret />
                </Column>
            </Panel>

            <section className="flex flex-1 flex-col items-start">
                <div className="flex flex-1 pt-[5px] pl-[11px]">
                    <BigButton icon="base" label="Base" width="w-10" caret />
                </div>
                <div className="flex h-5 items-center gap-[7px] pl-[5px]">
                    <button className="flex items-center gap-[7px]">
                        View
                        <Caret />
                    </button>
                    <Icon name="launcher" />
                </div>
            </section>
        </div>
    )
}

function FileTabs() {
    return (
        <nav className="flex h-[27px] items-center pt-[3px] text-white">
            <Burger className="ml-4" />
            <span className="ml-[11px] flex">
                <Slash />
            </span>
            <button className="ml-2">Start</button>
            <div className="ml-2 flex h-6 w-[104px] items-center gap-[9px] bg-[#3b4453] pl-4 [clip-path:polygon(9px_0,100%_0,calc(100%-9px)_100%,0_100%)]">
                <button className="font-bold">Drawing1*</button>
                <button aria-label="Close Drawing1">
                    <svg width="9" height="9" viewBox="0 0 9 9" aria-hidden="true">
                        <path d="M1 1l7 7M8 1l-7 7" stroke="#b5b9c0" strokeWidth="2" />
                    </svg>
                </button>
            </div>
            <button aria-label="New drawing" className="ml-[10px]">
                <svg width="14" height="14" viewBox="0 0 14 14" aria-hidden="true">
                    <path d="M7 0v14M0 7h14" stroke="#fff" strokeWidth="2" />
                </svg>
            </button>
            <span className="ml-[10px] flex">
                <Slash />
            </span>
        </nav>
    )
}

function Grip({ rows = 3, cols = 5, className }) {
    return (
        <svg width={cols * 2} height={rows * 2} className={clsx('shrink-0', className)} aria-hidden="true">
            {Array.from({ length: rows * cols }, (_, i) => (
                <rect key={i} x={(i % cols) * 2} y={Math.floor(i / cols) * 2} width="1" height="1" fill="#d9d9d9" />
            ))}
        </svg>
    )
}

function SideTab({ label }) {
    return (
        <button className="flex min-h-0 flex-1 flex-col items-center bg-[#3b4453] pt-0.5 text-[#e8e8e8]">
            <Grip rows={2} />
            <span className="flex flex-1 rotate-180 items-center justify-center text-xs [writing-mode:vertical-rl]">{label}</span>
        </button>
    )
}

const sections = [
    {
        title: 'General',
        rows: [
            ['Color', 'ByLayer', 'swatch'],
            ['Layer', '0'],
            ['Linetype', 'ByLayer', 'line'],
            ['Linetype scale', '1.0000'],
            ['Lineweight', 'ByLayer', 'line'],
            ['Transparency', 'ByLayer'],
            ['Thickness', '0.0000']
        ]
    },
    { title: '3D Visualization', rows: [['Material', 'ByLayer']] },
    {
        title: 'Plot style',
        rows: [
            ['Plot style', 'ByColor', 'dim'],
            ['Plot style table', 'None'],
            ['Plot table attached to', 'Model', 'dim'],
            ['Plot table type', 'Not available', 'dim']
        ]
    },
    {
        title: 'View',
        rows: [
            ['Center X', '28.3207', 'dim'],
            ['Center Y', '10.8617', 'dim'],
            ['Center Z', '0.0000', 'dim'],
            ['Height', '27.3906', 'dim'],
            ['Width', '62.0170', 'dim']
        ]
    },
    {
        title: 'Misc',
        rows: [
            ['Annotation scale', '1:1'],
            ['UCS icon On', 'Yes'],
            ['UCS icon at origin', 'Yes'],
            ['UCS per viewport', 'Yes'],
            ['UCS Name', ''],
            ['Visual Style', '2D Wireframe']
        ]
    }
]

function PropertiesPalette() {
    return (
        <aside className="flex w-[337px] shrink-0 flex-col pt-0.5 pb-0.5">
            <div className="flex min-h-0 flex-1 flex-col rounded-b border-b border-[#2e3440]">
                <header className="flex h-5 shrink-0 items-center gap-[5px] rounded-t bg-[#2e3440] pb-0.5 pl-[6px] text-white">
                    <Grip rows={5} cols={2} className="mt-1" />
                    PROPERTIES
                </header>
                <div className="pt-3 pr-[11px] pl-[17px]">
                    <div className="mb-[3px] flex items-center gap-[7px]">
                        <Combo
                            label="Selection"
                            value="No selection"
                            className={clsx('h-6 w-[237px] px-[3px] text-[#e8e8e8]', field)}
                        />
                        <button aria-label="Toggle PICKADD">
                            <Icon name="addSelect" />
                        </button>
                        <button aria-label="Select objects">
                            <Icon name="pickSelect" />
                        </button>
                        <button aria-label="Quick select">
                            <Icon name="quickSelect" />
                        </button>
                    </div>
                    {sections.map((s) => (
                        <section key={s.title} className="mb-0.5">
                            <h2 className="flex h-5 items-center justify-between bg-[#2e3440] pr-2 pl-[7px] font-bold text-white">
                                {s.title}
                                <Caret />
                            </h2>
                            <table className="ml-[17px] w-[292px] table-fixed border-collapse">
                                <tbody>
                                    {s.rows.map(([label, value, kind]) => (
                                        <tr key={label} className="h-[19px] border border-t-0 border-[#2e3542]">
                                            <th className="w-[133px] border-r border-[#2e3542] py-0 pl-[6px] text-left leading-[18px] font-normal whitespace-nowrap text-[#c9cdd3]">
                                                {label}
                                            </th>
                                            <td className={clsx('py-0 pl-[3px] leading-[18px]', kind === 'dim' ? 'text-[#8b919b]' : 'text-[#e8e8e8]')}>
                                                <span className="flex items-center">
                                                    {kind === 'swatch' && <span className="mr-[6px] h-[14px] w-[14px] bg-white" />}
                                                    {kind === 'line' && <span className="mr-1 h-px w-[66px] bg-white" />}
                                                    {value}
                                                </span>
                                            </td>
                                        </tr>
                                    ))}
                                </tbody>
                            </table>
                        </section>
                    ))}
                </div>
            </div>
        </aside>
    )
}

const GRID = 74.2
const range = (n) => Array.from({ length: n }, (_, i) => i)

function Grid() {
    const minorX = range(140).map((i) => Math.round(68 - GRID + (i * GRID) / 5))
    const minorY = range(90).map((i) => Math.round(62 - GRID + (i * GRID) / 5))
    return (
        <svg className="absolute inset-0 h-full w-full" aria-hidden="true">
            {minorX.map((x, i) => (
                <rect key={x} x={x} y="0" width="1" height="100%" fill={i % 5 ? '#262d38' : '#2f3648'} />
            ))}
            {minorY.map((y, i) => (
                <rect key={y} x="0" y={y} width="100%" height="1" fill={i % 5 ? '#262d38' : '#2f3648'} />
            ))}
            <rect x="0" y="729" width="100%" height="1" fill="#7a2a30" />
            <g fill="none" stroke="#fff">
                <path d="M122 11.500h24M153 11.500h25M149.500 0v8M149.500 15v20" />
                <path d="M146.500 8.500h6v6h-6z" />
            </g>
        </svg>
    )
}

function ViewCube() {
    return (
        <svg
            width="80"
            height="112"
            viewBox="0 0 80 112"
            className="absolute right-[10px] bottom-[6px] font-['Liberation_Sans',sans-serif]"
            aria-label="View cube"
        >
            <path d="M16 0h48v9q0 5-5 5h-38q-5 0-5-5z" fill="#8d909b" />
            <text x="20" y="9" fontSize="11" fill="#5b5f6b">
                WCS
            </text>
            <path d="M51 3h8l-4 4z" fill="none" stroke="#b4b6c0" />
            <circle cx="41" cy="71" r="31" fill="none" stroke="#474b52" strokeWidth="7" />
            <path d="M26 56h30v30h-30z" fill="#b4b4b4" />
            <path d="M32 62h18v18h-18z" fill="#a0a3a8" />
            <text x="41" y="74" fontSize="8" fill="#3a3f4a" textAnchor="middle">
                TOP
            </text>
            <g fontSize="13" fontWeight="bold" fill="#b0b1b3" textAnchor="middle">
                <text x="41" y="43">
                    N
                </text>
                <text x="9" y="76">
                    W
                </text>
                <text x="73" y="76">
                    E
                </text>
                <text x="41" y="108">
                    S
                </text>
            </g>
        </svg>
    )
}

function CommandLine() {
    return (
        <div className="absolute bottom-px left-0 flex h-[86px] w-[279px] font-['DejaVu_Sans_Mono',monospace] text-xs">
            <div className="flex w-[25px] shrink-0 flex-col items-center gap-2 bg-[#2b303d] pt-[5px]">
                <Grip cols={8} />
                <button aria-label="Close command line">
                    <svg width="10" height="10" viewBox="0 0 10 10" aria-hidden="true">
                        <path d="M1 1l8 8M9 1l-8 8" stroke="#b4b6b9" strokeWidth="2" />
                    </svg>
                </button>
                <button aria-label="Customize command line" className="mt-1">
                    <Icon name="wrench" />
                </button>
            </div>
            <div className="flex min-w-0 flex-1 flex-col">
                <div className="flex flex-1 flex-col justify-end overflow-hidden bg-[#98999b] pb-0.5 pl-0.5 leading-[15px] whitespace-pre text-[#101215]">
                    <p>Loading</p>
                    <p>Loading AeciIbApi...</p>
                    <p>Loading AeciIm...</p>
                    <p>Loading AeciRibbonUiApi...OPTIONS</p>
                    <p>Command:</p>
                </div>
                <div className="mt-px flex h-5 items-center bg-[#bfc1c3] px-1">
                    <Icon name="cmdPrompt" />
                    <Caret className="ml-0.5" color="text-[#4a4d52]" />
                    <input
                        aria-label="Command"
                        placeholder="Type a command"
                        className="ml-[6px] min-w-0 flex-1 bg-transparent italic placeholder:text-[#606367]"
                    />
                    <Caret className="rotate-180" color="text-[#4a4d52]" />
                </div>
            </div>
            {/* UCS icon showing through the command window */}
            <svg
                width="90"
                height="80"
                viewBox="0 0 90 80"
                className="pointer-events-none absolute -top-1 left-2"
                aria-hidden="true"
            >
                <path d="M14.500 4l5 7 5-7M67 56l12 13M79 56l-12 13" fill="none" stroke="#dcdde0" />
                <path d="M8.500 65.500h8v9h-8zM12.500 20v48" fill="none" stroke="#6b707b" />
                <path d="M17 70.500h46" stroke="#fff" strokeWidth="1.500" />
            </svg>
        </div>
    )
}

function Drawing() {
    return (
        <main className="relative min-w-0 flex-1 overflow-hidden bg-[#212830]">
            <Grid />
            <p className="relative pt-[6px] pl-[3px] text-white">[−][Top][2D Wireframe]</p>
            <CommandLine />
            <ViewCube />
        </main>
    )
}

function Option({ icon, label, checked, children }) {
    return (
        <div className="flex h-[25px] items-center">
            <label className="flex shrink-0 items-center gap-[3px]">
                <input
                    type="checkbox"
                    defaultChecked={checked}
                    aria-label={children ? label : undefined}
                    className="peer sr-only"
                />
                <span className="flex h-[14px] w-[14px] items-center justify-center border border-[#272e39] bg-[#8296b8]">
                    {checked && (
                        <svg width="10" height="10" viewBox="0 0 10 10" aria-hidden="true">
                            <path d="M1 5l3 3.500 5-8" fill="none" stroke="#222933" strokeWidth="2" />
                        </svg>
                    )}
                </span>
                <span className="flex w-4 justify-center">
                    <Icon name={icon} />
                </span>
                {!children && <span className="ml-[5px] whitespace-nowrap">{label}</span>}
            </label>
            {children}
        </div>
    )
}

function BlocksPalette() {
    return (
        <aside className="flex w-[300px] shrink-0 pt-0.5 pb-[3px] text-[#e8e8e8]">
            <nav className="mt-[22px] flex w-[21px] shrink-0 flex-col">
                {['Current Drawing', 'Recent', 'Favorites', 'Libraries'].map((tab, i) => (
                    <button
                        key={tab}
                        className={clsx(
                            'flex h-[121px] items-center justify-center rounded-l border border-[#222933]',
                            i === 0 ? 'border-r-0 text-white' : 'border-t-0 bg-[#2e3440] text-[#b5b9c0]'
                        )}
                    >
                        <span className="rotate-180 pr-1 [writing-mode:vertical-rl]">{tab}</span>
                    </button>
                ))}
            </nav>
            <div className="flex w-[279px] flex-col rounded-b border-b border-[#2e3440]">
                <header className="flex h-5 shrink-0 items-center gap-[5px] rounded-t bg-[#2e3440] pb-0.5 pl-[6px] text-white">
                    <Grip rows={5} cols={2} className="mt-1" />
                    BLOCKS
                </header>
                <div className="mt-[13px] flex items-center pl-[10px]">
                    <div className="flex h-[22px] w-[190px] items-center border border-[#343b4a] bg-[#464f61] px-1">
                        <input aria-label="Filter" placeholder="Filter..." className="min-w-0 flex-1 bg-transparent italic placeholder:text-[#8b919b]" />
                        <Caret color="text-[#8b919b]" />
                    </div>
                    <button aria-label="Insert block" className="ml-[9px]">
                        <Icon name="blockInsert" />
                    </button>
                    <button aria-label="Preview" className="ml-3 flex items-center gap-[6px]">
                        <Icon name="thumb" />
                        <Caret color="text-[#8b919b]" />
                    </button>
                </div>
                <h2 className="mt-[6px] pl-[10px] leading-[15px] font-bold text-[#d0d3d8]">Current Drawing Blocks</h2>
                <section className="mt-auto mr-[10px] mb-[11px] ml-[10px] flex flex-col overflow-hidden rounded-sm border border-[#222933]">
                    <header className="flex h-[23px] items-center bg-[#222933] pr-[9px] pl-[5px]">
                        <h2 className="flex-1">Options</h2>
                        <button aria-label="Option settings" className="mr-[10px]">
                            <Icon name="gear" />
                        </button>
                        <Caret />
                    </header>
                    <div className="flex flex-col pt-[5px] pl-[6px]">
                        <Option icon="insPoint" label="Insertion Point" checked />
                        <Option icon="scale" label="Scale">
                            <Combo label="Scale type" value="Scale" className={clsx('ml-2 h-[22px] w-[111px] shrink-0 px-1', field)} />
                            <label className="ml-2 flex shrink-0 items-center gap-1">
                                X:
                                <input defaultValue="1" className={clsx('h-[18px] w-[42px] px-0.5', field)} />
                            </label>
                            <label className="ml-1 flex shrink-0 items-center gap-1">
                                Y:
                                <input defaultValue="1" className={clsx('h-[18px] w-[42px] px-0.5', field)} />
                            </label>
                        </Option>
                        <Option icon="rotate" label="Rotation">
                            <span className="ml-2 w-[133px] shrink-0">Rotation</span>
                            <label className="flex flex-row-reverse items-center gap-1">
                                Angle
                                <input defaultValue="0" className={clsx('h-[18px] w-[42px] px-0.5', field)} />
                            </label>
                        </Option>
                        <Option icon="autoPlace" label="Auto-Placement" checked />
                        <Option icon="repeat" label="Repeat Placement" />
                        <Option icon="explodeWhite" label="Explode" />
                    </div>
                </section>
            </div>
        </aside>
    )
}

// [icon, cell width, flags]
const draftingCells = [
    ['stInfer', 'w-6'],
    ['stDyn', 'w-6', 'active'],
    ['stOrtho', 'w-6'],
    ['stPolar', 'w-10', 'caret'],
    ['stIso', 'w-10', 'caret'],
    ['stTrack', 'w-[23px]', 'active'],
    ['stOsnap', 'w-[39px]', 'active caret'],
    ['stLw', 'w-6'],
    ['stTransp', 'w-6', 'active'],
    ['stCycle', 'w-6'],
    ['st3d', 'w-10', 'caret']
]

const ucsCells = [
    ['stUcs', 'w-6', 'active'],
    ['stFilter', 'w-[39px]', 'caret'],
    ['stGizmo', 'w-[39px]', 'active caret']
]

function StatusCell({ icon, width, flags = '' }) {
    const active = flags.includes('active')
    const caret = flags.includes('caret')
    return (
        <button aria-label={icon} className={clsx('flex h-6 shrink-0 items-center bg-[#3b4453]', width)}>
            <span className={clsx('flex w-[23px] shrink-0 justify-center', active && 'h-[22px] items-center bg-[#5c8cc2]')}>
                <Icon name={icon} />
            </span>
            {caret && <Caret className="ml-1" />}
        </button>
    )
}

function StatusCells({ cells }) {
    return (
        <div className="flex gap-px">
            {cells.map(([icon, width, flags]) => (
                <StatusCell key={icon} icon={icon} width={width} flags={flags} />
            ))}
        </div>
    )
}

function StatusBar() {
    return (
        <footer className="flex h-[29px] shrink-0 items-start bg-[#222933] text-white">
            <nav className="flex h-6 items-center">
                <Burger className="ml-4" />
                <button className="ml-[9px] h-6 w-[69px] bg-[#3b4453] font-bold [clip-path:polygon(9px_0,100%_0,calc(100%-9px)_100%,0_100%)]">
                    Model
                </button>
                <button className="mr-[9px] ml-2">Layout1</button>
                <Slash />
                <button className="mr-[9px] ml-2">Layout2</button>
                <Slash />
                <button aria-label="New layout" className="mx-[11px]">
                    <svg width="14" height="14" viewBox="0 0 14 14" aria-hidden="true">
                        <path d="M7 0v14M0 7h14" stroke="#fff" strokeWidth="2" />
                    </svg>
                </button>
                <Slash />
            </nav>
            <div className="mt-0.5 ml-auto flex h-6 items-center gap-[3px]">
                <span className="flex h-6 w-[150px] items-center justify-end bg-[#3b4453] pr-[5px] whitespace-nowrap">
                    12.7346, 24.1700, 0.0000
                </span>
                <button className="h-6 w-[47px] bg-[#3b4453]">MODEL</button>
                <div className="flex">
                    <StatusCell icon="stGrid" width="w-6" flags="active" />
                    <StatusCell icon="stDots" width="w-10" flags="caret" />
                </div>
                <StatusCells cells={draftingCells} />
                <StatusCells cells={ucsCells} />
                <div className="flex h-6 items-center bg-[#3b4453]">
                    <StatusCell icon="stAnno" width="w-6" flags="active" />
                    <StatusCell icon="stAnnoAuto" width="w-6" />
                    <StatusCell icon="stAnnoScale" width="w-6" />
                    <button className="flex w-[34px] items-center gap-1 pl-1">
                        1:1
                        <Caret />
                    </button>
                </div>
                <div className="flex gap-px">
                    <StatusCell icon="gear" width="w-10" flags="caret" />
                    <StatusCell icon="stPlus" width="w-6" />
                </div>
                <div className="flex gap-px">
                    <button className="flex h-6 w-[97px] items-center bg-[#3b4453] pl-2">
                        <Icon name="stRuler" />
                        <span className="flex-1 text-center">Decimal</span>
                        <Caret className="mr-[6px]" />
                    </button>
                    <StatusCell icon="stQp" width="w-6" />
                </div>
                <div className="flex gap-px">
                    <StatusCell icon="stLockUi" width="w-10" flags="caret" />
                    <StatusCell icon="stIsolate" width="w-6" />
                </div>
                <StatusCell icon="stPerf" width="w-6" flags="active" />
                <StatusCell icon="stFull" width="w-6" />
                <div className="flex h-6 w-[23px] items-center bg-[#3b4453] pl-1">
                    <Burger />
                </div>
            </div>
        </footer>
    )
}

export default function App() {
    return (
        <div className="flex h-screen flex-col overflow-hidden bg-[#222933] font-['Open_Sans',sans-serif] text-[11px] leading-4">
            <TitleBar />
            <MenuBar />
            <RibbonTabs />
            <Ribbon />
            <FileTabs />
            <div className="flex min-h-0 flex-1 border-y-4 border-[#3b4453] bg-[#3b4453]">
                <div className="mt-0.5 flex w-[25px] shrink-0 flex-col gap-[5px] bg-[#222933] pt-[3px] pb-[5px] pr-0.5 pl-px">
                    <SideTab label="Sheet Set Manager" />
                    <SideTab label="Tool Palettes - All Palettes" />
                    <SideTab label="DesignCenter" />
                    <SideTab label="External References" />
                </div>
                <PropertiesPalette />
                <div className="w-1 shrink-0" />
                <Drawing />
                <div className="w-1 shrink-0" />
                <BlocksPalette />
                <div className="mt-px mb-0.5 flex w-[23px] shrink-0 flex-col bg-[#222933] pt-[3px] pb-0.5 pl-[3px]">
                    <SideTab label="Layer Properties Manager" />
                </div>
            </div>
            <StatusBar />
        </div>
    )
}
